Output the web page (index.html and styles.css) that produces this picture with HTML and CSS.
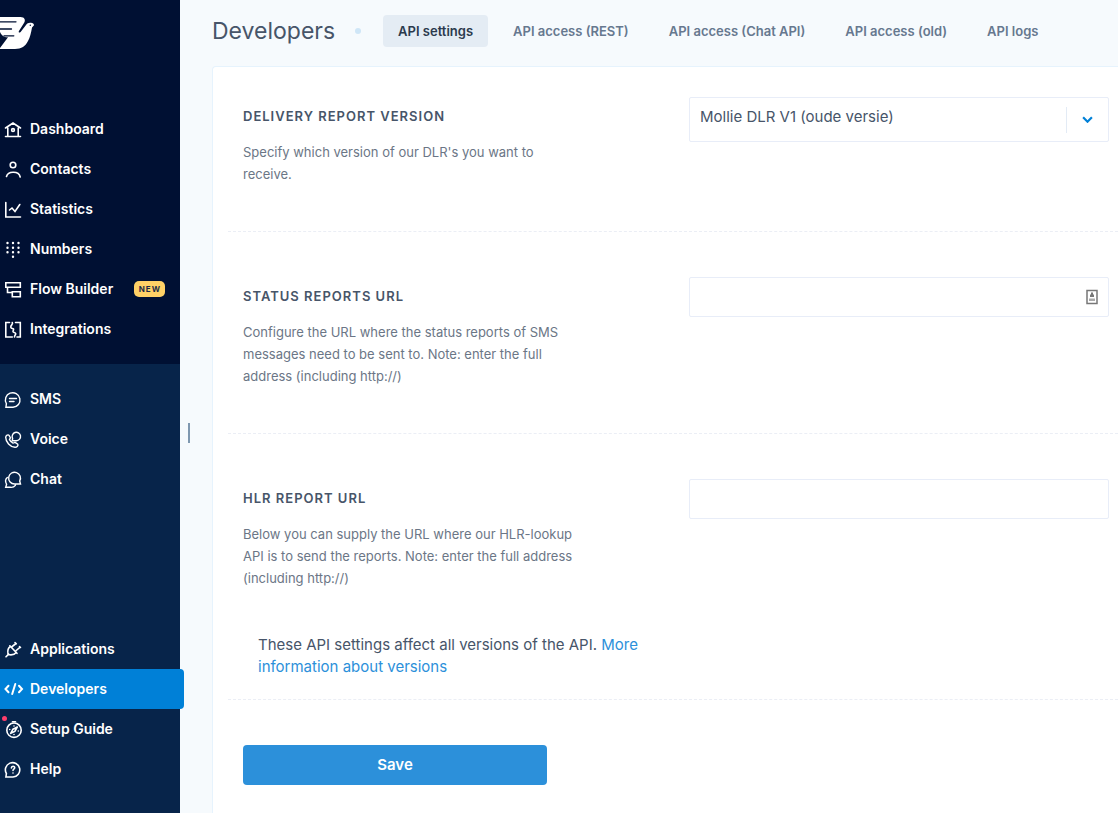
FILE: index.html
```html
<!DOCTYPE html>
<html lang="en">

<head>
  <meta charset="utf-8">
  <meta name="viewport" content="width=device-width, initial-scale=1">
  <title>Developers - API settings</title>
  <link rel="stylesheet" href="styles.css">
</head>

<body>
  <aside class="sidebar">
    <div class="sidebar-top">
      <a class="logo" href="#" aria-label="Home">
        <svg width="36" height="34" viewBox="0 16 36 34">
          <path fill="#fff" d="M0 17H20.500C24.500 17 26 20 24 23L18.800 31.200C18.400 32.600 19.400 33 20.600 32L26 25C27.200 23.200 29 22.400 31 22.800C32.800 23 34 24 34 25.200L32 27.400C31 33 30 37.500 28 41C25.500 46.300 21.500 49 15 49H0V48L8 37.300H6C2.800 36.600 1 34.500 0 32Z" />
          <path fill="none" stroke="#001033" stroke-width="1.300" stroke-linecap="round" d="M0 21.800H16M0 29H11.500M4 35.800H13.800" />
          <circle cx="30.300" cy="25.300" r=".7" fill="#001033" />
        </svg>
      </a>
      <nav class="menu">
        <a class="menu-item" href="#">
          <svg class="icon" viewBox="0 -1 18 18"><path d="M1.500 7 9 2l7.500 5M3.800 7v8M14.200 7v8M1.500 15.500h15" /><circle cx="9" cy="9" r="1.400" /></svg>
          Dashboard
        </a>
        <a class="menu-item" href="#">
          <svg class="icon" viewBox="0 -1 18 18"><circle cx="9" cy="4" r="2.800" /><path d="M2.500 15.500c.8-3 3-4.300 6.500-4.300h.5c3.500 0 6 1.500 6.700 4.800" /></svg>
          Contacts
        </a>
        <a class="menu-item" href="#">
          <svg class="icon" viewBox="0 -1 18 18"><path d="M1.800 1.500V16H16.500M5.500 9l2.500-2 3 3.500L15.800 3.500" /></svg>
          Statistics
        </a>
        <a class="menu-item" href="#">
          <svg class="icon dots" viewBox="0 -1 18 18"><path d="M3.500 2h0M9 2h0M14.500 2h0M3.500 6.700h0M9 6.700h0M14.500 6.700h0M3.500 11.300h0M9 11.300h0M14.500 11.300h0M9 15.700h0" /></svg>
          Numbers
        </a>
        <a class="menu-item" href="#">
          <svg class="icon" viewBox="0 -1 18 18"><path d="M1.800 1.800h14.500v4.500H1.800zM3.500 6.300v5.200h4.500M8.300 10.800h8v5h-8z" /></svg>
          Flow Builder
          <span class="badge">NEW</span>
        </a>
        <a class="menu-item" href="#">
          <svg class="icon" viewBox="0 -1 18 18"><path d="M5.500 1.500H1.800v14.500h6.500M11.500 1.500h4.800v14.500H13M8.300 1.500C9.500 3.500 6.300 4 6.800 6.300c.5 2 2 .5 2.700 1.700.5 1-.7 1.500-.5 2.500 0 1.300 2.500.5 2.700 2 .2 1.500-1.200 1.500-1.200 3.500" /></svg>
          Integrations
        </a>
      </nav>
    </div>

    <nav class="menu">
      <a class="menu-item" href="#">
        <svg class="icon thin" viewBox="0 -1 18 18"><path d="M1.900 16.300l.5-3.600A7.300 7.300 0 1 1 9 16.300zM5.500 7.500h7M5.500 10.500h4.500" /></svg>
        SMS
      </a>
      <a class="menu-item" href="#">
        <svg class="icon thin" viewBox="0 -1 18 18"><path d="M8.300 9.700l.3-2.300A4.200 4.200 0 1 1 12.500 9.700zM6.300 6.500 5 4.300C4.300 3.300 1.700 4.300 1.700 6.300c0 4.700 4.500 9.800 9.300 10 2 0 3.500-2 2.800-3l-2.300-1.700c-1.300-.7-1.500.8-2.500.5C7.500 11.500 6.200 10 5.500 8.700 5.200 7.700 6.800 7.600 6.300 6.500z" /></svg>
        Voice
      </a>
      <a class="menu-item" href="#">
        <svg class="icon thin" viewBox="0 -1 18 18"><path d="M10.600 13A5.900 5.900 0 1 1 15.700 10l.8 3zM3.300 6.500C1.500 8 1.300 11 2.600 13.300l-.9 3h4.500c2 .3 4-.4 5.200-2" /></svg>
        Chat
      </a>
    </nav>

    <nav class="menu menu-bottom">
      <a class="menu-item" href="#">
        <svg class="icon" viewBox="0 -1 18 18"><path d="M2 15.800l2.700-2.700M4 13.500C3.500 10.500 3.500 7 6.500 5.500l5.800 6c-2 2.500-4.800 2.800-8.300 2M5.800 4.800l7.200 7.500M8.200 5.500 12 2.500M12.200 9.500l4-3.300M11 1.500l1.300 1.300M15.500 5.500l1 1" /></svg>
        Applications
      </a>
      <a class="menu-item active" href="#">
        <svg class="icon bold" viewBox="0 0 18 18"><path d="M4.500 5.800 1.500 9l3 3.200M15 5.800 18 9l-3 3.200M11.300 4 8.200 14" /></svg>
        Developers
      </a>
      <a class="menu-item" href="#">
        <span class="notify"></span>
        <svg class="icon" viewBox="0 -1 18 18"><circle cx="10" cy="9.200" r="7.200" /><path d="M8.500.8h3M13.300 6l-2.300 4.200M6.700 12.400 9 8.200M13.300 6 9 8.200M6.700 12.400l4.300-2.200M10 5h0M14.300 10h0M5.700 8.500h0M10 13.500h0" /></svg>
        Setup Guide
      </a>
      <a class="menu-item" href="#">
        <svg class="icon" viewBox="0 -1 18 18"><path d="M1.900 16l.5-3.500A7.200 7.200 0 1 1 9 16zM7.400 7c0-2.200 3.300-2.200 3.300-.2 0 1.500-1.700 1.300-1.700 2.700M9 12h0" /></svg>
        Help
      </a>
    </nav>
  </aside>

  <div class="gutter"><span class="handle"></span></div>

  <main class="main">
    <header class="header">
      <h1>Developers</h1>
      <span class="dot"></span>
      <nav class="tabs">
        <a class="tab active" href="#">API settings</a>
        <a class="tab" href="#">API access (REST)</a>
        <a class="tab" href="#">API access (Chat API)</a>
        <a class="tab" href="#">API access (old)</a>
        <a class="tab" href="#">API logs</a>
      </nav>
    </header>

    <form class="card">
      <div class="row">
        <div class="info">
          <label for="dlr">Delivery report version</label>
          <p>Specify which version of our DLR's you want to receive.</p>
        </div>
        <div class="select-box">
          <select id="dlr">
            <option>Mollie DLR V1 (oude versie)</option>
          </select>
          <svg class="chevron" viewBox="0 0 10 6"><path d="M1 1l4 4 4-4" /></svg>
        </div>
      </div>

      <div class="row">
        <div class="info">
          <label for="status-url">Status reports URL</label>
          <p>Configure the URL where the status reports of SMS messages need to be sent to. Note: enter the full address (including http://)</p>
        </div>
        <div class="text-box">
          <input type="text" id="status-url">
          <svg class="autofill" viewBox="0 0 12 16"><path fill="none" stroke="#777" stroke-width="1.500" d="M1 1.500h10v13H1z" /><path fill="#777" d="M5 3.500h2v2h1V8H4V5.500h1z" /><path fill="#aaa" d="M3 9.500h6v2.500H3z" /></svg>
        </div>
      </div>

      <div class="row last">
        <div class="info">
          <label for="hlr-url">HLR report URL</label>
          <p>Below you can supply the URL where our HLR-lookup API is to send the reports. Note: enter the full address (including http://)</p>
        </div>
        <div class="text-box">
          <input type="text" id="hlr-url">
        </div>
        <p class="note">These API settings affect all versions of the API. <a href="#">More information about versions</a></p>
      </div>

      <div class="actions">
        <button class="save" type="submit">Save</button>
      </div>
    </form>
  </main>
</body>

</html>
```

FILE: styles.css
```css
* {
  box-sizing: border-box;
}

body {
  display: flex;
  min-height: 100vh;
  margin: 0;
  background: #f6fafd;
  color: #475569;
  font-family: "Inter", sans-serif;
  font-size: 15px;
  line-height: 22px;
}

a {
  color: #2c90da;
  text-decoration: none;
}

p {
  margin: 0;
}

/* sidebar */
.sidebar {
  display: flex;
  flex: 0 0 180px;
  flex-direction: column;
  background: #07244a;
}

.sidebar-top {
  padding-bottom: 15px;
  margin-bottom: 15px;
  background: #001033;
}

.logo {
  display: block;
  height: 109px;
  padding-top: 16px;
}

.logo svg {
  display: block;
}

.menu-bottom {
  margin-top: auto;
  padding-bottom: 24px;
}

.menu-item {
  display: flex;
  position: relative;
  align-items: center;
  gap: 8px;
  height: 40px;
  padding: 0 15px 0 4px;
  color: #fff;
  font-size: 14px;
  font-weight: 600;
}

.menu-item.active {
  margin-right: -4px;
  border-radius: 0 4px 4px 0;
  background: #0080d7;
}

.icon {
  flex: none;
  width: 18px;
  height: 18px;
  overflow: visible;
  fill: none;
  stroke: #fff;
  stroke-width: 1.6;
  stroke-linecap: round;
}

.icon.thin {
  stroke-width: 1.4;
}

.icon.bold {
  stroke-width: 2;
}

.icon.dots {
  stroke-width: 2.4;
}

.badge {
  margin-left: auto;
  padding: 0 4px 0 5px;
  border-radius: 5px;
  background: #ffd166;
  color: #1c2b46;
  font-size: 8px;
  font-weight: 700;
  letter-spacing: 1px;
  line-height: 16px;
}

.notify {
  position: absolute;
  top: 7px;
  left: 2px;
  width: 5px;
  height: 5px;
  border-radius: 50%;
  background: #ff3f6c;
}

.gutter {
  flex: 0 0 32px;
  padding: 423px 0 0 8px;
}

.handle {
  display: block;
  width: 2px;
  height: 20px;
  background: #7f98b0;
}

/* page */
.main {
  display: flex;
  flex: 1;
  flex-direction: column;
  min-width: 0;
}

.header {
  display: flex;
  align-items: center;
  height: 66px;
  padding-bottom: 4px;
}

h1 {
  margin: 0;
  font-size: 23px;
  font-weight: 400;
  line-height: 32px;
}

.dot {
  width: 6px;
  height: 6px;
  margin: 0 22px 0 20px;
  border-radius: 50%;
  background: #cfe6f7;
}

.tabs {
  display: flex;
  gap: 10px;
}

.tab {
  padding: 0 15px;
  border-radius: 4px;
  color: #66788f;
  font-size: 13px;
  font-weight: 600;
  line-height: 32px;
  white-space: nowrap;
}

.tab.active {
  background: #e4ecf4;
  color: #2b3a4d;
}

.card {
  flex: 1;
  padding-left: 15px;
  border: solid #e6f3fd;
  border-width: 1px 0 0 1px;
  border-radius: 4px 0 0 0;
  background: #fff;
}

.row {
  display: grid;
  grid-template-columns: 1fr 1fr;
  column-gap: 26px;
  align-items: start;
  padding: 45px 9px 46px 15px;
  border-bottom: 1px dashed #ebeef5;
}

.row:first-child {
  padding-top: 30px;
}

.row.last {
  padding-bottom: 21px;
}

.info {
  max-width: 340px;
  padding-top: 8px;
  color: #6b7686;
  font-size: 13px;
}

.info label {
  display: block;
  margin-bottom: 14px;
  color: #475569;
  font-weight: 600;
  letter-spacing: 1px;
  text-transform: uppercase;
}

.select-box,
.text-box {
  display: flex;
  align-items: center;
  border: 1px solid #e8edf8;
  border-radius: 2px;
  background: #fff;
}

.select-box {
  height: 45px;
}

.text-box {
  height: 40px;
}

select,
input {
  flex: 1;
  min-width: 0;
  height: 100%;
  padding: 0 10px;
  border: 0;
  background: none;
  color: #475569;
  font: inherit;
  outline: 0;
}

select {
  padding-bottom: 6px;
  appearance: none;
}

.chevron {
  width: 42px;
  height: 26px;
  padding: 9px 15px 10px;
  border-left: 1px solid #e3ebf5;
  fill: none;
  stroke: #0080d7;
  stroke-width: 2;
}

.autofill {
  width: 12px;
  height: 16px;
  margin-right: 10px;
}

.note {
  margin-top: 45px;
  padding-left: 15px;
}

.actions {
  padding: 45px 9px 28px 15px;
}

.save {
  width: 100%;
  max-width: 304px;
  height: 40px;
  border: 0;
  border-radius: 4px;
  background: #2c90da;
  color: #fff;
  font: inherit;
  font-weight: 600;
}
```
